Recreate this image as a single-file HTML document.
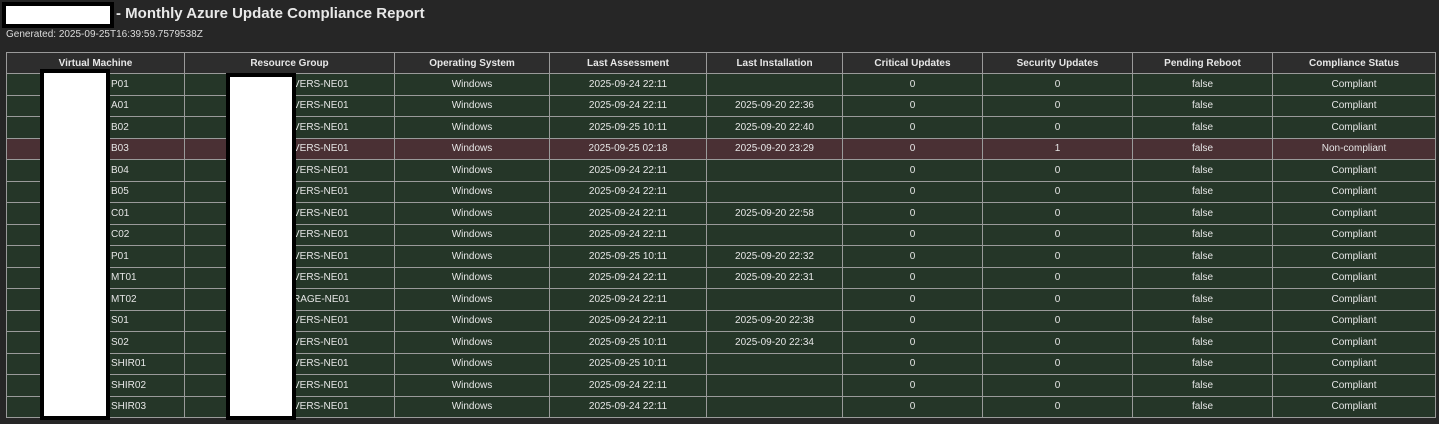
<!DOCTYPE html><html><head><meta charset="utf-8"><style>
body{margin:0;width:1439px;height:424px;background:#262626;font-family:"Liberation Sans",Arial,sans-serif;color:#e6e6e6;position:relative;overflow:hidden}
h1{position:absolute;left:116px;top:5px;margin:0;font-size:15px;font-weight:bold;color:#e8e8e8}
.gen{position:absolute;left:6px;top:29px;font-size:10px;color:#dcdcdc}
table{position:absolute;left:6px;top:52px;border-collapse:collapse;table-layout:fixed;width:1429px;font-size:10px}
td,th{border:1px solid #9a9a9a;text-align:center;height:20.5px;padding:0;white-space:nowrap;overflow:hidden}
th{background:#2d2d2d;font-weight:bold;height:20px}
tr.g td{background:#253628}
tr.r td{background:#4a3034}
td.vm{text-align:left;padding-left:104px}
td.rg{text-align:left;padding-left:108px}
.box{position:absolute;background:#fff;border:4px solid #000}
</style></head><body>
<div class="box" style="left:2px;top:2px;width:104px;height:18px"></div>
<h1>- Monthly Azure Update Compliance Report</h1>
<div class="gen">Generated: 2025-09-25T16:39:59.7579538Z</div>
<table>
<colgroup><col style="width:178px"><col style="width:210px"><col style="width:155px"><col style="width:157px"><col style="width:136px"><col style="width:140px"><col style="width:150px"><col style="width:140px"><col style="width:163px"></colgroup>
<tr><th>Virtual Machine</th><th>Resource Group</th><th>Operating System</th><th>Last Assessment</th><th>Last Installation</th><th>Critical Updates</th><th>Security Updates</th><th>Pending Reboot</th><th>Compliance Status</th></tr>
<tr class="g"><td class="vm">P01</td><td class="rg">VERS-NE01</td><td>Windows</td><td>2025-09-24 22:11</td><td></td><td>0</td><td>0</td><td>false</td><td>Compliant</td></tr>
<tr class="g"><td class="vm">A01</td><td class="rg">VERS-NE01</td><td>Windows</td><td>2025-09-24 22:11</td><td>2025-09-20 22:36</td><td>0</td><td>0</td><td>false</td><td>Compliant</td></tr>
<tr class="g"><td class="vm">B02</td><td class="rg">VERS-NE01</td><td>Windows</td><td>2025-09-25 10:11</td><td>2025-09-20 22:40</td><td>0</td><td>0</td><td>false</td><td>Compliant</td></tr>
<tr class="r"><td class="vm">B03</td><td class="rg">VERS-NE01</td><td>Windows</td><td>2025-09-25 02:18</td><td>2025-09-20 23:29</td><td>0</td><td>1</td><td>false</td><td>Non-compliant</td></tr>
<tr class="g"><td class="vm">B04</td><td class="rg">VERS-NE01</td><td>Windows</td><td>2025-09-24 22:11</td><td></td><td>0</td><td>0</td><td>false</td><td>Compliant</td></tr>
<tr class="g"><td class="vm">B05</td><td class="rg">VERS-NE01</td><td>Windows</td><td>2025-09-24 22:11</td><td></td><td>0</td><td>0</td><td>false</td><td>Compliant</td></tr>
<tr class="g"><td class="vm">C01</td><td class="rg">VERS-NE01</td><td>Windows</td><td>2025-09-24 22:11</td><td>2025-09-20 22:58</td><td>0</td><td>0</td><td>false</td><td>Compliant</td></tr>
<tr class="g"><td class="vm">C02</td><td class="rg">VERS-NE01</td><td>Windows</td><td>2025-09-24 22:11</td><td></td><td>0</td><td>0</td><td>false</td><td>Compliant</td></tr>
<tr class="g"><td class="vm">P01</td><td class="rg">VERS-NE01</td><td>Windows</td><td>2025-09-25 10:11</td><td>2025-09-20 22:32</td><td>0</td><td>0</td><td>false</td><td>Compliant</td></tr>
<tr class="g"><td class="vm">MT01</td><td class="rg">VERS-NE01</td><td>Windows</td><td>2025-09-24 22:11</td><td>2025-09-20 22:31</td><td>0</td><td>0</td><td>false</td><td>Compliant</td></tr>
<tr class="g"><td class="vm">MT02</td><td class="rg">RAGE-NE01</td><td>Windows</td><td>2025-09-24 22:11</td><td></td><td>0</td><td>0</td><td>false</td><td>Compliant</td></tr>
<tr class="g"><td class="vm">S01</td><td class="rg">VERS-NE01</td><td>Windows</td><td>2025-09-24 22:11</td><td>2025-09-20 22:38</td><td>0</td><td>0</td><td>false</td><td>Compliant</td></tr>
<tr class="g"><td class="vm">S02</td><td class="rg">VERS-NE01</td><td>Windows</td><td>2025-09-25 10:11</td><td>2025-09-20 22:34</td><td>0</td><td>0</td><td>false</td><td>Compliant</td></tr>
<tr class="g"><td class="vm">SHIR01</td><td class="rg">VERS-NE01</td><td>Windows</td><td>2025-09-25 10:11</td><td></td><td>0</td><td>0</td><td>false</td><td>Compliant</td></tr>
<tr class="g"><td class="vm">SHIR02</td><td class="rg">VERS-NE01</td><td>Windows</td><td>2025-09-24 22:11</td><td></td><td>0</td><td>0</td><td>false</td><td>Compliant</td></tr>
<tr class="g"><td class="vm">SHIR03</td><td class="rg">VERS-NE01</td><td>Windows</td><td>2025-09-24 22:11</td><td></td><td>0</td><td>0</td><td>false</td><td>Compliant</td></tr>
</table>
<div class="box" style="left:40px;top:69px;width:62px;height:343px"></div>
<div class="box" style="left:226px;top:73px;width:62px;height:339px"></div>
</body></html>
